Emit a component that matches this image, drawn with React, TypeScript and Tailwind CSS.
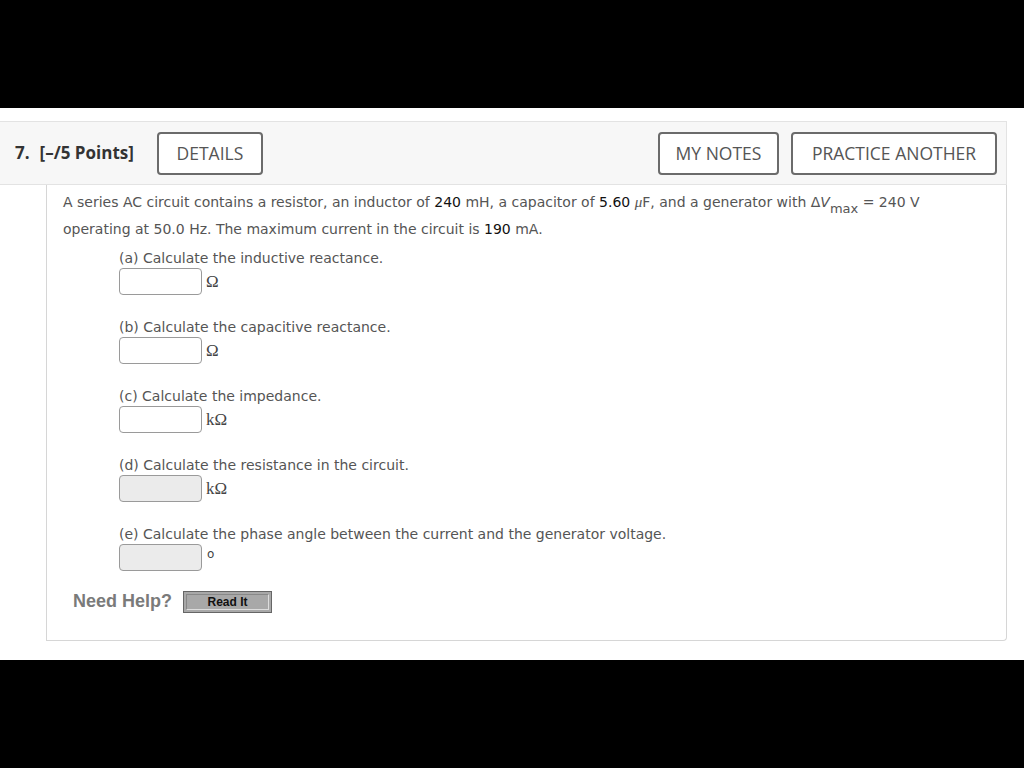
export default function App() {
  const parts = [
    { label: "(a) Calculate the inductive reactance.", unit: "Ω", filled: false },
    { label: "(b) Calculate the capacitive reactance.", unit: "Ω", filled: false },
    { label: "(c) Calculate the impedance.", unit: "kΩ", filled: false },
    { label: "(d) Calculate the resistance in the circuit.", unit: "kΩ", filled: true },
    { label: "(e) Calculate the phase angle between the current and the generator voltage.", unit: "°", filled: true },
  ];

  return (
    <div className="flex h-[768px] w-[1024px] flex-col bg-black">
      <div className="h-[108px]" />
      <div className="h-[552px] bg-white pt-[13px]">
        <div className="w-[1007px]">
          {/* header */}
          <div className="flex h-[64px] items-center border-y border-r border-[#e3e3e3] bg-[#f7f7f7] pl-[15px] pr-[9px] font-['Open_Sans',sans-serif]">
            <span className="text-[17px] font-bold text-[#333]">7.</span>
            <span className="ml-[10px] text-[17px] font-bold text-[#333]">[–/5 Points]</span>
            <button className="ml-[23px] h-[43px] w-[106px] rounded-[4px] border-2 border-[#6b6b6b] bg-white text-[17.5px] text-[#555]">
              DETAILS
            </button>
            <div className="flex-1" />
            <button className="h-[43px] w-[121px] rounded-[4px] border-2 border-[#6b6b6b] bg-white text-[17.5px] text-[#555]">
              MY NOTES
            </button>
            <button className="ml-[12px] h-[43px] w-[206px] rounded-[4px] border-2 border-[#6b6b6b] bg-white text-[17.5px] text-[#555]">
              PRACTICE ANOTHER
            </button>
          </div>

          {/* body */}
          <div className="ml-[46px] h-[456px] rounded-br-[4px] border-x border-b border-[#d6d6d6] pl-[16px] pt-[4px] font-['DejaVu_Sans',Verdana,sans-serif] text-[14px] text-[#555]">
            <p className="leading-[26px]">
              A series AC circuit contains a resistor, an inductor of <span className="text-[#111]">240</span> mH, a
              capacitor of <span className="text-[#111]">5.60</span> <span className="font-['Liberation_Serif',serif] italic text-[15px]">μ</span>F, and a
              generator with Δ<span className="italic">V</span>
              <span className="relative top-[6px] text-[13px]">max</span> = 240 V
              <br />
              operating at 50.0 Hz. The maximum current in the circuit is <span className="text-[#111]">190</span> mA.
            </p>

            <div className="ml-[56px] mt-[6px]">
              {parts.map((p) => (
                <div key={p.label} className="mb-[22px]">
                  <div className="leading-[20px]">{p.label}</div>
                  <div className="flex items-center">
                    <div
                      className={
                        "h-[27px] w-[83px] rounded-[4px] border border-[#9a9a9a] " +
                        (p.filled ? "bg-[#ebebeb]" : "bg-white")
                      }
                    />
                    {p.unit === "°" ? (
                      <span className="ml-[5px] -mt-[8px] text-[12px] text-[#444]">o</span>
                    ) : (
                      <span className="ml-[4px] font-['Liberation_Serif',serif] text-[17px] text-[#444]">{p.unit}</span>
                    )}
                  </div>
                </div>
              ))}
            </div>

            <div className="ml-[10px] mt-[-5px] flex items-center font-['Liberation_Sans',Arial,sans-serif]">
              <span className="text-[18px] font-bold text-[#7a7a7a]">Need Help?</span>
              <button className="ml-[11px] h-[22px] w-[89px] border border-[#666] bg-[#a8a8a8] p-[2px]">
                <div className="flex h-full w-full items-center justify-center border border-t-[#888] border-l-[#888] border-b-[#ddd] border-r-[#ddd] text-[12px] font-bold text-[#111]">
                  Read It
                </div>
              </button>
            </div>
          </div>
        </div>
      </div>
      <div className="flex-1" />
    </div>
  );
}
